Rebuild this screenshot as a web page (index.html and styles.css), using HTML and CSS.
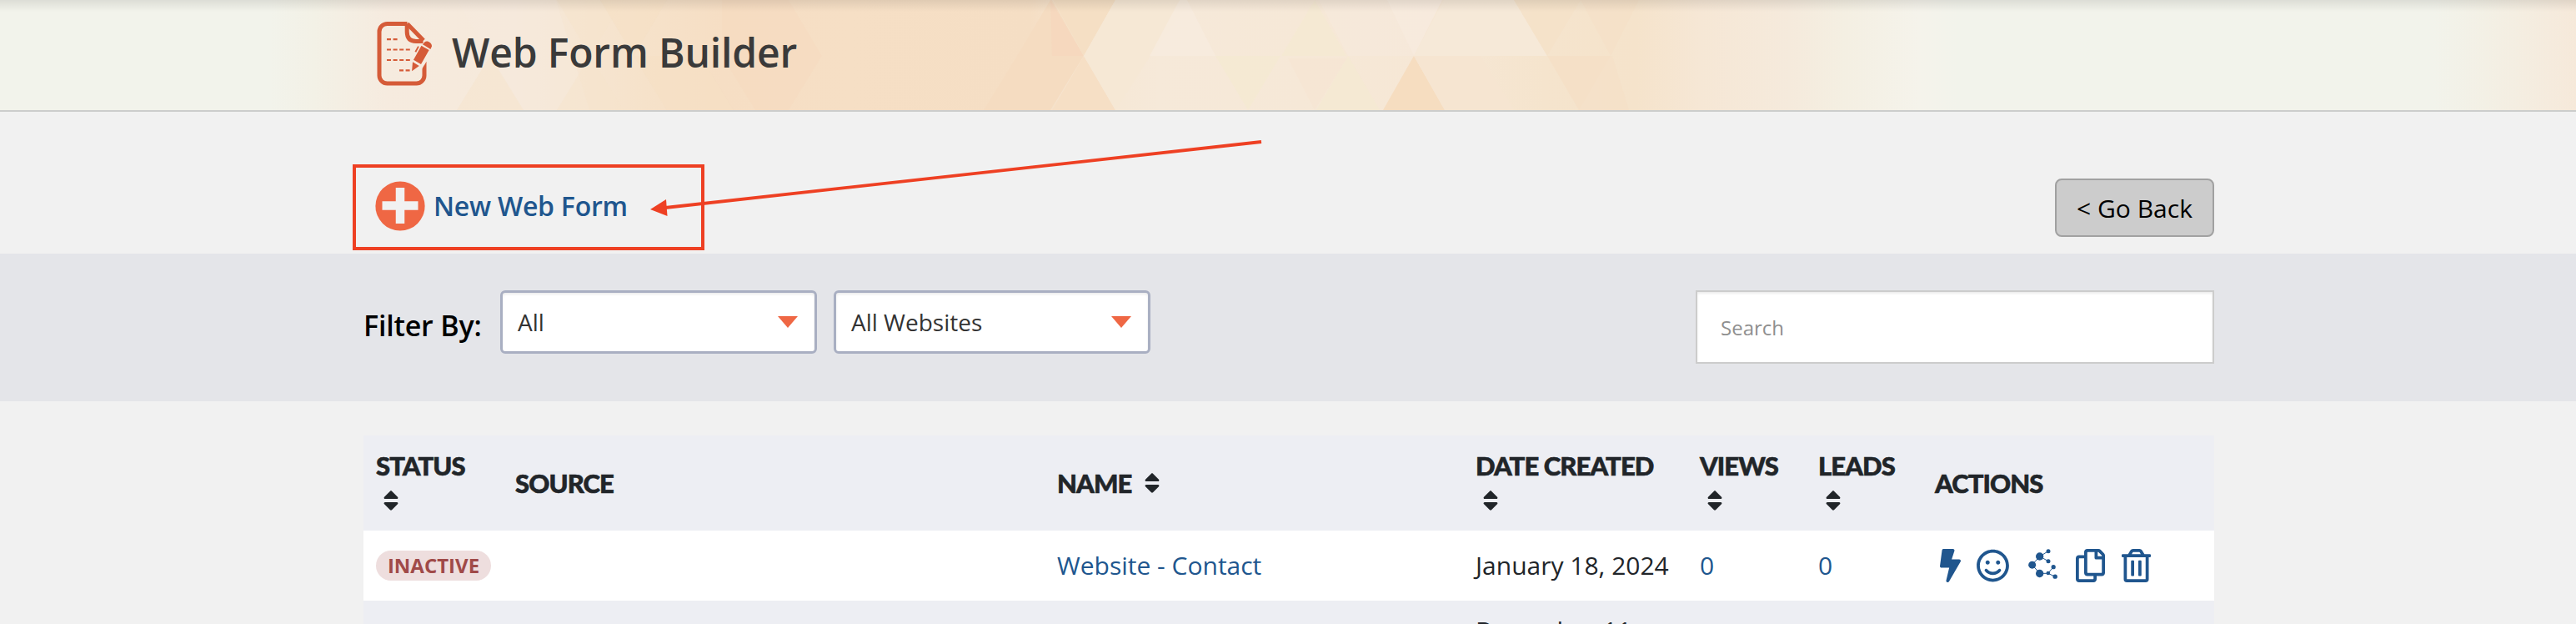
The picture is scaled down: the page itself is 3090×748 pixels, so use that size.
FILE: index.html
```html
<!DOCTYPE html>
<html lang="en">
<head>
    <meta charset="UTF-8">
    <title>Web Form Builder</title>
    <link rel="stylesheet" href="styles.css">
</head>
<body>
    <!-- Shared icon shapes -->
    <svg class="sprite">
        <symbol id="sort" viewBox="7 57 306 398">
            <path d="M41 288h238c21.4 0 32.1 25.9 17 41L177 448c-9.4 9.4-24.6 9.4-33.9 0L24 329c-15.1-15.1-4.4-41 17-41zm255-105L177 64c-9.4-9.4-24.6-9.4-33.9 0L24 183c-15.1 15.1-4.4 41 17 41h238c21.4 0 32.1-25.9 17-41z"/>
        </symbol>
    </svg>

    <header class="header">
        <svg class="header-bg" viewBox="0 0 3090 132" preserveAspectRatio="none">
            <defs>
                <linearGradient id="base" gradientUnits="userSpaceOnUse" x1="0" y1="0" x2="3090" y2="0">
                    <stop offset="0" stop-color="#f2f3eb"/>
                    <stop offset=".105" stop-color="#f2f3eb"/>
                    <stop offset=".122" stop-color="#f3f1e6"/>
                    <stop offset=".15" stop-color="#f6ebdf"/>
                    <stop offset=".2" stop-color="#f6e9da"/>
                    <stop offset=".25" stop-color="#f6e2ca"/>
                    <stop offset=".28" stop-color="#f6dec4"/>
                    <stop offset=".33" stop-color="#f6dfc5"/>
                    <stop offset=".4" stop-color="#f5dec4"/>
                    <stop offset=".421" stop-color="#f6e7d4"/>
                    <stop offset=".45" stop-color="#f6e9d9"/>
                    <stop offset=".56" stop-color="#f6e7d5"/>
                    <stop offset=".6" stop-color="#f5e4cd"/>
                    <stop offset=".635" stop-color="#f5e3cb"/>
                    <stop offset=".66" stop-color="#f6e7d5"/>
                    <stop offset=".695" stop-color="#f5eadc"/>
                    <stop offset=".715" stop-color="#f4efe2"/>
                    <stop offset=".745" stop-color="#f5f3eb"/>
                    <stop offset=".76" stop-color="#f2f3eb"/>
                    <stop offset=".945" stop-color="#f2f3eb"/>
                    <stop offset=".965" stop-color="#f3f0e5"/>
                    <stop offset="1" stop-color="#f6e9da"/>
                </linearGradient>
                <linearGradient id="shade" x1="0" y1="0" x2="0" y2="1">
                    <stop offset="0" stop-color="#000" stop-opacity=".09"/>
                    <stop offset="1" stop-color="#000" stop-opacity="0"/>
                </linearGradient>
            </defs>
            <rect width="3090" height="132" fill="url(#base)"/>
            <!-- Triangles -->
            <path fill="#f7ebdf" fill-opacity=".35" d="M548 0h80l-40 67zM707 132h-80l-40-65 40-67h40z"/>
            <path fill="#f5e3cc" fill-opacity=".5" d="M588 67l40 65h-80zM708 67l40 65h-80zM668 0h80l-40 67z"/>
            <path fill="#f6dfc4" fill-opacity=".5" d="M720 0h80l-40 67zM760 67l40 65h80l-40-65z"/>
            <path fill="#f6d9be" fill-opacity=".45" d="M866 0h80l40 67-40 65h-40l-40-65z"/>
            <path fill="#f5dcc1" d="M1220 67l40-67h2l38 67-40 65h-80z"/>
            <path fill="#f6d6bd" fill-opacity=".6" d="M1260 0l40 67h-38z"/>
            <path fill="#f5dfc4" d="M1263 0h75l-38 67z"/>
            <path fill="#f6dfc5" d="M1300 67l38 65h-76z"/>
            <path fill="#f6e8d5" d="M1338 0h90l-48 67-42 65-38-65z"/>
            <path fill="#f7ebdf" fill-opacity=".8" d="M1418 0h6l34 67h-79l36-67z"/>
            <path fill="#f5e9d2" fill-opacity=".7" d="M1577 0l38 67h-78zM1617 67l38 65h-76zM1458 67h78l-39 65z"/>
            <path fill="#f6e4d2" fill-opacity=".6" d="M1545 70h70l-38 62z"/>
            <path fill="#f6eadc" fill-opacity=".6" d="M1582 0h84l30 67h-79z"/>
            <path fill="#f7ebdf" fill-opacity=".8" d="M1664 0h66l-34 67z"/>
            <path fill="#f6ddc0" d="M1696 67l37 65h-74z"/>
            <path fill="#f6e5d1" d="M1696 67h80l40 65h-83z"/>
            <path fill="#f6e9d8" d="M1732 0h84l40 67h-160z"/>
            <path fill="#f5e1c8" fill-opacity=".8" d="M1816 0h80l-40 67zM1856 67h76l-38 65z"/>
            <path fill="#f5e0c7" fill-opacity=".6" d="M1896 0h70l-34 67zM1856 67l38 65h60l-20-65z"/>
            <rect width="3090" height="14" fill="url(#shade)"/>
        </svg>
        <div class="container header-inner">
            <svg class="header-icon" viewBox="0 0 96 96">
                <path class="line" d="M48.5 12.5H24.5a9.5 9.5 0 0 0-9.5 9.500v52.500a9.500 9.500 0 0 0 9.500 9.500h35a9.500 9.500 0 0 0 9.500-9.500V58"/>
                <path class="line" d="M48.200 12.500v9.500q0 11.400 10.800 11.400h8.500"/>
                <path class="line" d="M48.500 12.500L68 32.500"/>
                <path class="dash" d="M24 31.200h13M24 43.500h28M24 56h28M39 68.300h15"/>
                <path class="gap" d="M76.500 37L59 66"/>
                <path class="pen" d="M67 37.200l2.300-2.800c3-2.600 9 .8 8.700 5.200l-1.600 3.400zM65.500 38.800l9.200 5.300-9.700 17-9-5.300zM55 58.300l7.800 4.600-8.700 6.300zM61.200 39.200l1.600.9-3.600 6.600-1.700-.9z"/>
            </svg>
            <h1 class="title">Web Form Builder</h1>
        </div>
    </header>

    <section class="container toolbar">
        <a class="new-form" href="#">
            <svg class="plus" viewBox="0 0 60 60">
                <circle cx="30" cy="30" r="29.600"/>
                <path d="M8.500 29.500h43M30 8v43"/>
            </svg>
            New Web Form
        </a>
        <button class="go-back">&lt; Go Back</button>
        <!-- Callout over the new form link -->
        <div class="callout"></div>
        <svg class="arrow" viewBox="0 0 740 100">
            <path class="arrow-line" d="M18 83L733 4"/>
            <path class="arrow-head" d="M0 85l19-12 1.500 20z"/>
        </svg>
    </section>

    <section class="filters">
        <div class="container filters-inner">
            <span class="filter-label">Filter By:</span>
            <div class="select">All<span class="caret"></span></div>
            <div class="select">All Websites<span class="caret"></span></div>
            <input type="text" class="search" placeholder="Search">
        </div>
    </section>

    <main class="container">
        <table class="forms">
            <colgroup>
                <col class="col-status">
                <col class="col-source">
                <col class="col-name">
                <col class="col-date">
                <col class="col-views">
                <col class="col-leads">
                <col>
            </colgroup>
            <thead>
                <tr>
                    <th>STATUS<br><svg class="sort"><use href="#sort"/></svg></th>
                    <th>SOURCE</th>
                    <th>NAME <svg class="sort"><use href="#sort"/></svg></th>
                    <th>DATE CREATED<br><svg class="sort"><use href="#sort"/></svg></th>
                    <th>VIEWS<br><svg class="sort"><use href="#sort"/></svg></th>
                    <th>LEADS<br><svg class="sort"><use href="#sort"/></svg></th>
                    <th>ACTIONS</th>
                </tr>
            </thead>
            <tbody>
                <tr>
                    <td><span class="badge">INACTIVE</span></td>
                    <td></td>
                    <td><a href="#">Website - Contact</a></td>
                    <td>January 18, 2024</td>
                    <td><a href="#">0</a></td>
                    <td><a href="#">0</a></td>
                    <td>
                        <div class="actions">
                            <svg class="bolt" viewBox="0 0 320 512"><path d="M296 160H180.600l42.600-129.800C227.200 15 215.700 0 200 0H56C44 0 33.800 8.900 32.200 20.800l-32 240C-1.700 275.200 9.500 288 24 288h118.700L96.600 482.500c-3.600 15.200 8 29.500 23.300 29.500 8.400 0 16.400-4.400 20.800-12l176-304c9.300-15.900-2.200-36-20.700-36z"/></svg>
                            <svg class="smile" viewBox="0 0 496 512"><path d="M248 8C111 8 0 119 0 256s111 248 248 248 248-111 248-248S385 8 248 8zm0 448c-110.300 0-200-89.700-200-200S137.700 56 248 56s200 89.700 200 200-89.700 200-200 200zm-80-216c17.700 0 32-14.300 32-32s-14.300-32-32-32-32 14.300-32 32 14.300 32 32 32zm160 0c17.700 0 32-14.300 32-32s-14.300-32-32-32-32 14.300-32 32 14.300 32 32 32zm4 72.600c-20.800 25-51.500 39.400-84 39.400s-63.200-14.300-84-39.400c-8.500-10.200-23.700-11.500-33.800-3.100-10.200 8.500-11.500 23.600-3.100 33.800 30 36 74.100 56.600 120.900 56.600s90.900-20.600 120.900-56.600c8.500-10.200 7.100-25.300-3.100-33.800-10.100-8.400-25.300-7.100-33.800 3.100z"/></svg>
                            <svg class="nodes" viewBox="429 420 105 120">
                                <path d="M501 428l-31 19-27 30 27 31h30l25 11M470 447l31 17M500 508l19-23"/>
                                <circle cx="443" cy="477.500" r="13.500"/>
                                <circle cx="470" cy="447" r="14"/>
                                <circle cx="470" cy="508.500" r="14"/>
                                <circle cx="501" cy="428" r="7.500"/>
                                <circle cx="501" cy="464.500" r="7.500"/>
                                <circle cx="500.500" cy="507" r="7"/>
                                <circle cx="519.500" cy="485" r="7.800"/>
                                <circle cx="525.500" cy="519.500" r="8"/>
                            </svg>
                            <svg class="copy" viewBox="0 0 448 512"><path d="M433.941 65.941l-51.882-51.882A48 48 0 0 0 348.118 0H176c-26.510 0-48 21.490-48 48v48H48c-26.510 0-48 21.490-48 48v320c0 26.510 21.490 48 48 48h224c26.510 0 48-21.490 48-48v-48h80c26.510 0 48-21.490 48-48V99.882a48 48 0 0 0-14.059-33.941zM266 464H54a6 6 0 0 1-6-6V150a6 6 0 0 1 6-6h74v224c0 26.510 21.490 48 48 48h96v42a6 6 0 0 1-6 6zm128-96H182a6 6 0 0 1-6-6V54a6 6 0 0 1 6-6h106v88c0 13.255 10.745 24 24 24h88v202a6 6 0 0 1-6 6zm6-256h-64V48h9.632c1.591 0 3.117.632 4.243 1.757l48.368 48.368a6 6 0 0 1 1.757 4.243V112z"/></svg>
                            <svg class="trash" viewBox="0 0 448 512"><path d="M268 416h24a12 12 0 0 0 12-12V188a12 12 0 0 0-12-12h-24a12 12 0 0 0-12 12v216a12 12 0 0 0 12 12zM432 80h-82.410l-34-56.700A48 48 0 0 0 274.410 0H173.590a48 48 0 0 0-41.160 23.300L98.410 80H16A16 16 0 0 0 0 96v16a16 16 0 0 0 16 16h16v336a48 48 0 0 0 48 48h288a48 48 0 0 0 48-48V128h16a16 16 0 0 0 16-16V96a16 16 0 0 0-16-16zM171.840 50.910A6 6 0 0 1 177 48h94a6 6 0 0 1 5.150 2.910L293.610 80H154.390zM368 464H80V128h288zm-212-48h24a12 12 0 0 0 12-12V188a12 12 0 0 0-12-12h-24a12 12 0 0 0-12 12v216a12 12 0 0 0 12 12z"/></svg>
                        </div>
                    </td>
                </tr>
                <tr>
                    <td></td>
                    <td></td>
                    <td></td>
                    <td>December 11, 2023</td>
                    <td></td>
                    <td></td>
                    <td></td>
                </tr>
            </tbody>
        </table>
    </main>
</body>
</html>
```
FILE: styles.css
```css
* {
    box-sizing: border-box;
}

body {
    margin: 0;
    height: 748px;
    overflow: hidden;
    background-color: #f1f1f1;
    color: #212529;
    font-family: "Open Sans", sans-serif;
    font-size: 30px;
}

a {
    color: #20568e;
    text-decoration: none;
}

.sprite {
    display: none;
}

.container {
    width: 2220px;
    margin: 0 0 0 436px;
}

/* Header */
.header {
    position: relative;
    height: 134px;
    border-bottom: 2px solid #cccdcc;
}

.header-bg {
    position: absolute;
    left: 0;
    top: 0;
    width: 100%;
    height: 100%;
}

.header-inner {
    position: relative;
    display: flex;
    padding: 16px 0 0 4px;
}

.header-icon {
    width: 96px;
    height: 96px;
}

.header-icon .line {
    fill: none;
    stroke: #d55b38;
    stroke-width: 5;
    stroke-linejoin: round;
}

.header-icon .dash {
    fill: none;
    stroke: #d55b38;
    stroke-width: 2.2;
    stroke-dasharray: 5 2.6;
}

.header-icon .gap {
    stroke: #f6ebdf;
    stroke-width: 13;
}

.header-icon .pen {
    fill: #d55b38;
}

.title {
    margin: 0 0 0 6px;
    font-size: 48px;
    font-weight: 600;
    line-height: 94px;
    letter-spacing: -0.15px;
    color: #3a3a3a;
}

/* New form link and back button */
.toolbar {
    position: relative;
    display: flex;
    justify-content: space-between;
    align-items: flex-start;
    height: 170px;
    padding-top: 80px;
}

.new-form {
    display: flex;
    align-items: center;
    gap: 10px;
    margin: 3px 0 0 14px;
    font-size: 32px;
    font-weight: 600;
    line-height: 60px;
    letter-spacing: -0.25px;
}

.plus {
    width: 60px;
    height: 60px;
    fill: #ef6744;
}

.plus path {
    stroke: #f1f1f1;
    stroke-width: 10.5;
}

.go-back {
    width: 191px;
    height: 70px;
    padding: 0;
    background-color: #ccc;
    border: 2px solid #a1a1a1;
    border-radius: 8px;
    color: #000;
    font-family: inherit;
    font-size: 30px;
}

.callout {
    position: absolute;
    left: -13px;
    top: 63px;
    width: 422px;
    height: 103px;
    border: 4px solid #ee4023;
}

.arrow {
    position: absolute;
    left: 344px;
    top: 32px;
    width: 740px;
    height: 100px;
}

.arrow-line {
    stroke: #ee4023;
    stroke-width: 3.8;
}

.arrow-head {
    fill: #ee4023;
}

/* Filters */
.filters {
    height: 177px;
    background-color: #e4e5e9;
}

.filters-inner {
    display: flex;
    align-items: flex-start;
    padding-top: 44px;
}

.filter-label {
    width: 164px;
    font-size: 34px;
    font-weight: 600;
    line-height: 84px;
    letter-spacing: -0.2px;
    color: #000;
}

.select {
    display: flex;
    align-items: center;
    justify-content: space-between;
    width: 380px;
    height: 76px;
    margin-right: 20px;
    padding: 0 20px 0 18px;
    background-color: #fff;
    border: 3px solid #a9afc2;
    border-radius: 6px;
    box-shadow: inset 0 2px 3px rgba(0, 0, 0, 0.08);
    font-size: 28px;
    color: #333;
}

.caret {
    border-left: 12px solid transparent;
    border-right: 12px solid transparent;
    border-top: 14px solid #ef6744;
}

.search {
    width: 622px;
    height: 88px;
    margin-left: auto;
    padding: 0 28px;
    background-color: #fff;
    border: 2px solid #ccc;
    box-shadow: inset 0 2px 3px rgba(0, 0, 0, 0.08);
    font-family: inherit;
    font-size: 24px;
}

.search::placeholder {
    color: #8f8f8f;
}

/* Table */
.forms {
    width: 2220px;
    margin-top: 41px;
    table-layout: fixed;
    border-collapse: collapse;
    line-height: 42px;
}

.col-status { width: 167px; }
.col-source { width: 650px; }
.col-name { width: 502px; }
.col-date { width: 269px; }
.col-views { width: 142px; }
.col-leads { width: 140px; }

th {
    padding: 15px;
    background-color: #edeef3;
    font-family: Lato, sans-serif;
    font-size: 31px;
    font-weight: 900;
    letter-spacing: -0.9px;
    text-align: left;
    -webkit-text-stroke: 0.6px #212529;
}

td {
    padding: 15px;
}

tbody tr {
    background-color: #fff;
}

tbody tr:nth-child(even) {
    background-color: #edeef3;
}

.sort {
    width: 18px;
    height: 24px;
    margin-left: 9px;
    fill: #212529;
}

.badge {
    display: block;
    width: 138px;
    height: 36px;
    background-color: #eedede;
    border-radius: 18px;
    color: #a04a48;
    font-size: 24px;
    font-weight: 700;
    line-height: 36px;
    text-align: center;
}

.actions {
    display: flex;
    align-items: center;
    height: 54px;
    padding-left: 6px;
    fill: #20568e;
}

.actions svg {
    height: 40px;
}

.bolt { width: 25px; }
.smile { width: 39px; margin-left: 19px; }
.nodes { width: 35px; margin-left: 23px; }
.copy { width: 35px; margin-left: 22px; }
.trash { width: 35px; margin-left: 20px; }

.nodes path {
    fill: none;
    stroke: #20568e;
    stroke-width: 3;
}
```
